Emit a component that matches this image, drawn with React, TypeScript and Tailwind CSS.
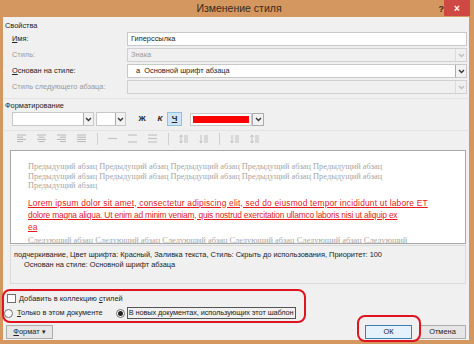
import React from "react";

const Chev = ({ c = "#333" }: { c?: string }) => (
  <svg width="7" height="5" viewBox="0 0 7 5"><path d="M1 1 L3.5 3.5 L6 1" stroke={c} strokeWidth="1.3" fill="none" /></svg>
);

const AlignIcon = ({ kind }: { kind: number }) => {
  const lines: [number, number][][] = [
    [[0, 9], [0, 6], [0, 9], [0, 6]],
    [[0, 9], [1.5, 7.5], [0, 9], [1.5, 7.5]],
    [[0, 9], [3, 9], [0, 9], [3, 9]],
    [[0, 9], [0, 9], [0, 9], [0, 9]],
  ];
  const l = lines[kind];
  return (
    <svg width="10" height="9" viewBox="0 0 10 9">
      {l.map(([a, b], i) => (
        <line key={i} x1={a} x2={b} y1={1 + i * 2.2} y2={1 + i * 2.2} stroke="#b8b8b8" strokeWidth="1" />
      ))}
    </svg>
  );
};

const SpacingIcon = ({ n }: { n: number }) => (
  <svg width="10" height="9" viewBox="0 0 10 9">
    {Array.from({ length: n }).map((_, i) => (
      <line key={i} x1={0} x2={9} y1={n === 1 ? 4.5 : 1 + i * (7 / (n - 1))} y2={n === 1 ? 4.5 : 1 + i * (7 / (n - 1))} stroke="#c4c4c4" strokeWidth="1.2" />
    ))}
  </svg>
);

const ParaIcon = ({ flip }: { flip?: boolean }) => (
  <svg width="10" height="10" viewBox="0 0 10 10">
    <line x1="5" x2="9" y1="2" y2="2" stroke="#c0c0c0" />
    <line x1="5" x2="9" y1="4" y2="4" stroke="#c0c0c0" />
    <line x1="5" x2="9" y1="6" y2="6" stroke="#c0c0c0" />
    <line x1="5" x2="9" y1="8" y2="8" stroke="#c0c0c0" />
    <path d={flip ? "M2 1 L2 9 M0.5 7 L2 9 L3.5 7" : "M2 1 L2 9 M0.5 3 L2 1 L3.5 3 M0.5 7 L2 9 L3.5 7"} stroke="#c0c0c0" fill="none" />
  </svg>
);

const Sep = () => <div className="w-px h-[12px] bg-[#d0d0d0]" />;

const prev = "Предыдущий абзац Предыдущий абзац Предыдущий абзац Предыдущий абзац Предыдущий абзац";
const next = "Следующий абзац Следующий абзац Следующий абзац Следующий абзац Следующий абзац Следующий";

export default function App() {
  const font = { fontFamily: '"Liberation Sans", Arial, sans-serif' };
  const serif = { fontFamily: '"Liberation Serif", serif' };
  return (
    <div className="relative w-[474px] h-[344px] bg-[#d4975f] flex flex-col overflow-hidden text-[7.4px] text-[#222]" style={font}>
      {/* title bar */}
      <div className="h-[17px] flex items-center relative shrink-0">
        <div className="flex-1 text-center text-[10.5px] text-[#3a2a1e] pl-[4px]">Изменение стиля</div>
        <div className="absolute right-[30px] top-[3px] text-[9px] text-[#3a2a1e] font-bold">?</div>
        <div className="absolute right-[4px] top-0 w-[26px] h-[16px] bg-[#cf4944] flex items-center justify-center text-white text-[10px] font-bold">×</div>
      </div>
      {/* content */}
      <div className="flex-1 ml-[3px] mr-[5px] mb-[4px] bg-[#f0f0f0] flex flex-col">
        <div className="pl-[2px] pt-[4px] h-[12px] leading-[10px]">Свойства</div>
        <div className="flex flex-col gap-[2px] pt-[3px] pl-[9px] pr-[2px]">
          <div className="flex items-center h-[14px]">
            <div className="w-[115px]"><span className="underline">И</span>мя:</div>
            <div className="flex-1 h-[14px] bg-white border border-[#c8c8c8] flex items-center pl-[3px]">Гиперссылка</div>
          </div>
          <div className="flex items-center h-[14px]">
            <div className="w-[115px] text-[#9a9a9a]">Стиль:</div>
            <div className="flex-1 h-[14px] bg-[#f0f0f0] border border-[#d0d0d0] flex items-center pl-[3px] text-[#9a9a9a]">
              <span className="flex-1">Знака</span>
              <div className="w-[11px] h-full border-l border-[#dcdcdc] flex items-center justify-center"><Chev c="#bbb" /></div>
            </div>
          </div>
          <div className="flex items-center h-[14px]">
            <div className="w-[115px]"><span className="underline">О</span>снован на стиле:</div>
            <div className="flex-1 h-[14px] bg-white border border-[#c8c8c8] flex items-center pl-[8px]">
              <span className="flex-1">a&nbsp; Основной шрифт абзаца</span>
              <div className="w-[11px] h-full border-l border-[#adadad] bg-[#f2f2f2] flex items-center justify-center"><Chev /></div>
            </div>
          </div>
          <div className="flex items-center h-[14px]">
            <div className="w-[115px] text-[#9a9a9a]">Стиль следующего абзаца:</div>
            <div className="flex-1 h-[14px] bg-[#f0f0f0] border border-[#d0d0d0] flex items-center justify-end">
              <div className="w-[11px] h-full border-l border-[#dcdcdc] flex items-center justify-center"><Chev c="#bbb" /></div>
            </div>
          </div>
        </div>
        <div className="mt-[4px] border-t border-[#e3e3e3] pl-[2px] pt-[2px] h-[11px] leading-[9px]">Форматирование</div>
        {/* toolbar 1 */}
        <div className="flex items-center h-[14px] mt-[3px] pl-[9px]">
          <div className="w-[82px] h-[14px] bg-white border border-[#c8c8c8] flex justify-end">
            <div className="w-[10px] h-full border-l border-[#adadad] bg-[#f2f2f2] flex items-center justify-center"><Chev /></div>
          </div>
          <div className="ml-[2px] w-[30px] h-[14px] bg-white border border-[#c8c8c8] flex justify-end">
            <div className="w-[10px] h-full border-l border-[#adadad] bg-[#f2f2f2] flex items-center justify-center"><Chev /></div>
          </div>
          <div className="ml-[9px] w-[14px] text-center font-bold text-[8px]">Ж</div>
          <div className="ml-[4px] w-[14px] text-center font-bold italic text-[8px]">К</div>
          <div className="w-[15px] h-[14px] bg-[#cde6f7] border border-[#92c0e0] flex items-center justify-center font-bold underline text-[8px]">Ч</div>
          <div className="ml-[8px] w-[62px] h-[13px] bg-white border border-[#c8c8c8] p-[2px]"><div className="w-full h-full bg-[#ff0000]" /></div>
          <div className="w-[12px] h-[13px] border border-[#adadad] bg-[#f0f0f0] flex items-center justify-center"><Chev /></div>
        </div>
        {/* toolbar 2 */}
        <div className="mt-[4px] border-t border-[#e3e3e3] h-[16px] flex items-center pl-[14px] gap-[10px]">
          <AlignIcon kind={0} />
          <AlignIcon kind={1} />
          <AlignIcon kind={2} />
          <AlignIcon kind={3} />
          <Sep />
          <SpacingIcon n={1} />
          <SpacingIcon n={2} />
          <SpacingIcon n={3} />
          <Sep />
          <ParaIcon />
          <ParaIcon flip />
          <Sep />
          <ParaIcon flip />
          <ParaIcon />
        </div>
        {/* preview */}
        <div className="ml-[7px] mr-[3px] mt-[4px] h-[94px] bg-white border border-[#a8a8a8] overflow-hidden pl-[17px] pt-[11px]">
          <div className="text-[8.4px] leading-[9.5px] text-[#a6a6a6] whitespace-nowrap" style={serif}>
            <div>{prev}</div>
            <div>{prev}</div>
            <div>Предыдущий абзац</div>
          </div>
          <div className="mt-[6px] text-[8.4px] leading-[12px] text-[#e31a1c] underline whitespace-nowrap">
            <div className="tracking-[0.2px]">Lorem ipsum dolor sit amet, consectetur adipiscing elit, sed do eiusmod tempor incididunt ut labore ET</div>
            <div className="tracking-[-0.2px]">dolore magna aliqua. Ut enim ad minim veniam, quis nostrud exercitation ullamco laboris nisi ut aliquip ex</div>
            <div>ea</div>
          </div>
          <div className="mt-[3px] text-[8.4px] leading-[9.5px] text-[#a6a6a6] whitespace-nowrap" style={serif}>
            {next}
          </div>
        </div>
        {/* description */}
        <div className="ml-[7px] mr-[3px] mt-[1px] h-[39px] border border-[#dadada] pl-[3px] pt-[4px] leading-[10px] whitespace-nowrap">
          <div>подчеркивание, Цвет шрифта: Красный, Заливка текста, Стиль: Скрыть до использования, Приоритет: 100</div>
          <div className="pl-[10px]">Основан на стиле: Основной шрифт абзаца</div>
        </div>
        {/* options */}
        <div className="mt-[9px] pl-[4px] flex items-center h-[11px]">
          <div className="w-[9px] h-[9px] bg-white border border-[#707070]" />
          <span className="ml-[3px]">Добавить в коллекцию <span className="underline">с</span>тилей</span>
        </div>
        <div className="mt-[3px] pl-[1px] flex items-center h-[12px]">
          <div className="w-[9px] h-[9px] rounded-full bg-white border border-[#707070]" />
          <span className="ml-[4px]"><span className="underline">Т</span>олько в этом документе</span>
          <div className="ml-[13px] w-[9px] h-[9px] rounded-full bg-white border border-[#707070] flex items-center justify-center">
            <div className="w-[5px] h-[5px] rounded-full bg-[#222]" />
          </div>
          <span className="ml-[2px] border border-[#555] px-[1px] h-[12px] leading-[10px] tracking-[-0.1px]">В новых документах, использующих этот шаблон</span>
        </div>
        {/* buttons */}
        <div className="mt-[6px] flex items-center pl-[3px] pr-[3px]">
          <div className="w-[47px] h-[14px] border border-[#adadad] bg-[#e6e6e6] flex items-center justify-center">
            <span><span className="underline">Ф</span>ормат ▾</span>
          </div>
          <div className="flex-1" />
          <div className="w-[47px] h-[14px] border border-[#3c7fb1] bg-[#e5f1fb] flex items-center justify-center">ОК</div>
          <div className="ml-[7px] w-[47px] h-[14px] border border-[#adadad] bg-[#e6e6e6] flex items-center justify-center">Отмена</div>
        </div>
      </div>
      {/* red highlights */}
      <div className="absolute left-[2px] top-[289px] w-[304px] h-[34px] border-2 border-[#e0141e] rounded-[8px] pointer-events-none" />
      <div className="absolute left-[357px] top-[315px] w-[64px] h-[27px] border-2 border-[#e0141e] rounded-[8px] pointer-events-none" />
    </div>
  );
}
